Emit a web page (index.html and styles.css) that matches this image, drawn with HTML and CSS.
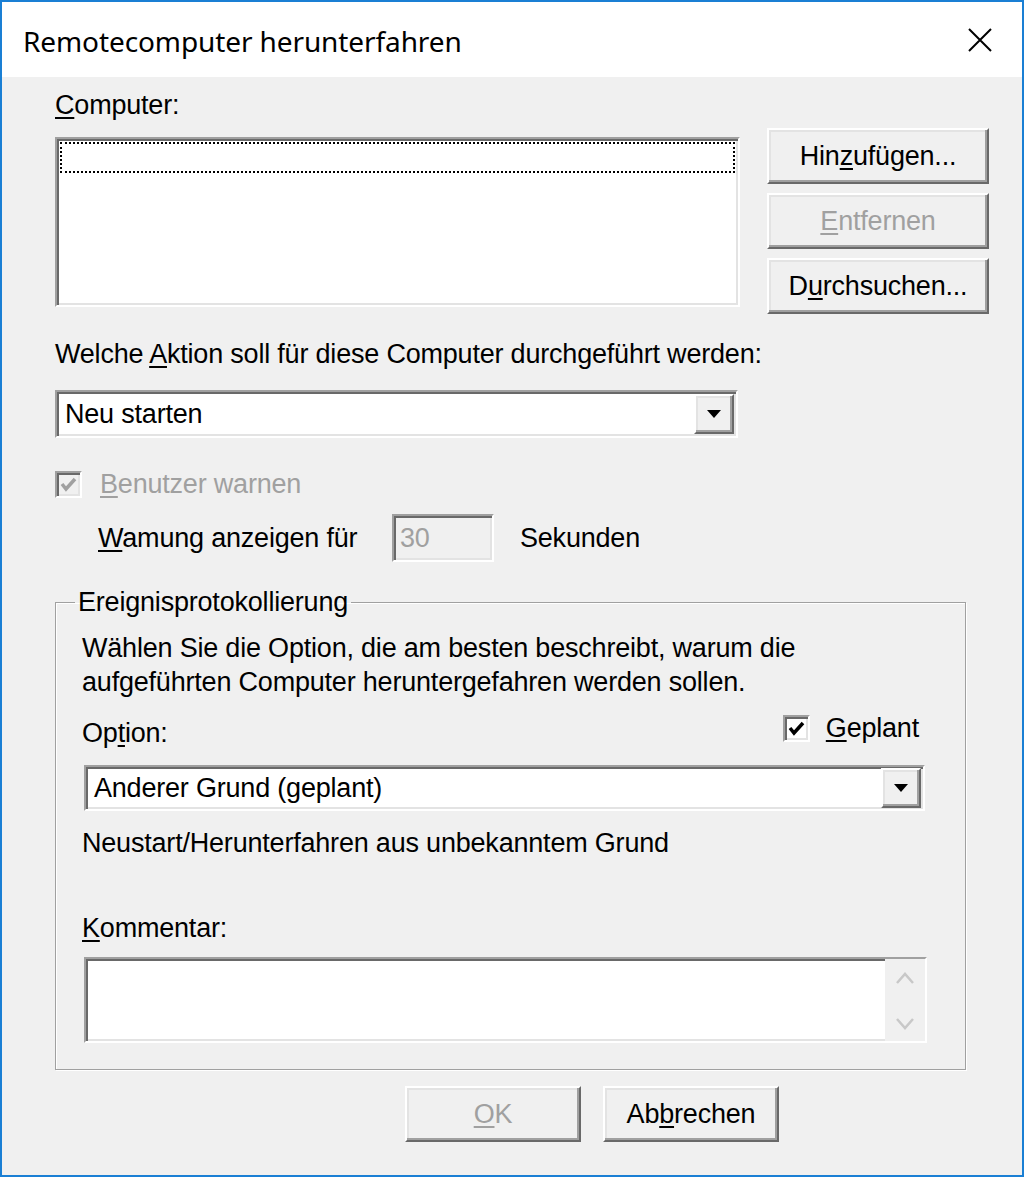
FILE: index.html
```html
<!DOCTYPE html>
<html>
<head lang="de">
    <meta charset="UTF-8">
    <title>Remotecomputer herunterfahren</title>
    <link rel="stylesheet" href="styles.css">
</head>
<body>
<div class="window">
    <div class="titlebar">
        <span class="title">Remotecomputer herunterfahren</span>
        <svg class="close" width="24" height="24" viewBox="0 0 24 24">
            <path d="M1 1 L23 23 M23 1 L1 23" stroke="#000" stroke-width="2" fill="none"/>
        </svg>
    </div>

    <div class="content">
        <div class="label"><u>C</u>omputer:</div>
        <div class="list-row">
            <div class="listbox sunken">
                <div class="focus-item"></div>
            </div>
            <div class="btn-col">
                <div class="btn raised">Hin<u>z</u>ufügen...</div>
                <div class="btn raised disabled"><u>E</u>ntfernen</div>
                <div class="btn raised">D<u>u</u>rchsuchen...</div>
            </div>
        </div>

        <div class="label action-label">Welche <u>A</u>ktion soll für diese Computer durchgeführt werden:</div>
        <div class="combo sunken combo-action">
            <span class="combo-text">Neu starten</span>
            <span class="drop raised"><span class="arrow"></span></span>
        </div>

        <div class="check-row disabled">
            <span class="checkbox sunken gray">
                <svg width="19" height="19" viewBox="0 0 19 19"><path d="M3 9 L7 14 L16 4" stroke="#a0a0a0" stroke-width="3.5" fill="none"/></svg>
            </span>
            <span><u>B</u>enutzer warnen</span>
        </div>

        <div class="warn-row">
            <span class="warn-label"><u>W</u>amung anzeigen für</span>
            <span class="numbox sunken">30</span>
            <span class="unit">Sekunden</span>
        </div>

        <fieldset class="group">
            <legend>Ereignisprotokollierung</legend>
            <p class="desc">Wählen Sie die Option, die am besten beschreibt, warum die<br>aufgeführten Computer heruntergefahren werden sollen.</p>
            <div class="option-row">
                <span class="option-label">Op<u>t</u>ion:</span>
                <span class="geplant">
                    <span class="checkbox sunken">
                        <svg width="19" height="19" viewBox="0 0 19 19"><path d="M3 9 L7 14 L16 4" stroke="#000" stroke-width="3.5" fill="none"/></svg>
                    </span>
                    <span><u>G</u>eplant</span>
                </span>
            </div>
            <div class="combo sunken combo-reason">
                <span class="combo-text">Anderer Grund (geplant)</span>
                <span class="drop raised"><span class="arrow"></span></span>
            </div>
            <div class="label reason">Neustart/Herunterfahren aus unbekanntem Grund</div>
            <div class="label comment-label"><u>K</u>ommentar:</div>
            <div class="comment sunken">
                <div class="scroll">
                    <svg width="20" height="14" viewBox="0 0 20 14"><path d="M2 12 L10 3 L18 12" stroke="#c8c8c8" stroke-width="2.5" fill="none"/></svg>
                    <svg width="20" height="14" viewBox="0 0 20 14"><path d="M2 2 L10 11 L18 2" stroke="#c8c8c8" stroke-width="2.5" fill="none"/></svg>
                </div>
            </div>
        </fieldset>

        <div class="bottom-row">
            <div class="btn raised disabled small"><u>O</u>K</div>
            <div class="btn raised small">Ab<u>b</u>rechen</div>
        </div>
    </div>
</div>
</body>
</html>
```

FILE: styles.css
```css
*{
    margin: 0;
    padding: 0;
    box-sizing: border-box;
}
body{
    font-family: "Liberation Sans", Arial, sans-serif;
    font-size: 27px;
    letter-spacing: -0.2px;
    line-height: 30px;
    color: #000;
    background: #f0f0f0;
}
u{
    text-decoration-thickness: 2px;
    text-underline-offset: 3px;
}
.window{
    width: 1024px;
    height: 1177px;
    border: 2px solid #1a7fd4;
    background: #f0f0f0;
    display: flex;
    flex-direction: column;
}
.titlebar{
    height: 75px;
    background: #fff;
    display: flex;
    align-items: center;
    justify-content: space-between;
    padding: 0 30px 0 21px;
    flex: none;
}
.title{
    font-family: "Noto Sans", "Open Sans", sans-serif;
    font-size: 28px;
    letter-spacing: -0.1px;
    margin-top: 2px;
}
.close{
    margin-top: 1px;
}
.content{
    padding: 13px 0 0 53px;
    flex: 1;
}

/* 3D borders */
.sunken{
    border: 2px solid;
    border-color: #a0a0a0 #fff #fff #a0a0a0;
    box-shadow: inset 2px 2px 0 #696969, inset -2px -2px 0 #e3e3e3;
    background: #fff;
}
.raised{
    border: 2px solid;
    border-color: #fff #696969 #696969 #fff;
    box-shadow: inset -2px -2px 0 #a0a0a0, inset 2px 2px 0 #e3e3e3;
    background: #f0f0f0;
}
.disabled{
    color: #a0a0a0;
}

.list-row{
    display: flex;
    gap: 27px;
    margin-top: 8px;
}
.listbox{
    width: 685px;
    height: 170px;
    margin-top: 9px;
    padding: 3px 3px 0 3px;
}
.focus-item{
    height: 31px;
    border: 2px dotted #000;
}
.btn-col{
    display: flex;
    flex-direction: column;
    gap: 9px;
}
.btn{
    width: 222px;
    height: 56px;
    display: flex;
    align-items: center;
    justify-content: center;
}

.action-label{
    margin-top: 25px;
}
.combo{
    display: flex;
    align-items: center;
    justify-content: space-between;
}
.combo-action{
    width: 683px;
    height: 48px;
    margin-top: 21px;
    padding: 0 2px 0 8px;
}
.drop{
    width: 40px;
    height: 40px;
    display: flex;
    align-items: center;
    justify-content: center;
    border-width: 2px;
}
.arrow{
    width: 0;
    height: 0;
    border-left: 7px solid transparent;
    border-right: 7px solid transparent;
    border-top: 8px solid #000;
}

.check-row{
    display: flex;
    align-items: center;
    gap: 18px;
    height: 30px;
    margin-top: 31px;
}
.checkbox{
    width: 27px;
    height: 27px;
    display: flex;
    align-items: center;
    justify-content: center;
    flex: none;
}
.checkbox.gray{
    background: #f0f0f0;
}

.warn-row{
    display: flex;
    align-items: center;
    margin: 15px 0 0 43px;
    height: 48px;
}
.warn-label{
    width: 294px;
}
.numbox{
    width: 102px;
    height: 48px;
    background: #f0f0f0;
    color: #a0a0a0;
    padding: 0 0 0 6px;
    display: flex;
    align-items: center;
}
.unit{
    margin-left: 26px;
}

.group{
    width: 909px;
    margin-top: 25px;
    border: 1px solid #a0a0a0;
    box-shadow: inset 1px 1px 0 #fff, 1px 1px 0 #fff;
    padding: 0 38px 26px 26px;
}
.group legend{
    margin-left: -7px;
    padding: 0 3px;
}
.desc{
    line-height: 34px;
    margin-top: 14px;
}
.option-row{
    display: flex;
    justify-content: space-between;
    align-items: flex-start;
    margin-top: 14px;
}
.option-label{
    margin-top: 5px;
}
.geplant{
    display: flex;
    align-items: center;
    gap: 16px;
    height: 30px;
    margin-right: 8px;
}
.combo-reason{
    width: 841px;
    height: 46px;
    margin: 17px 0 0 2px;
    padding: 0 2px 0 8px;
}
.reason{
    margin-top: 17px;
}
.comment-label{
    margin-top: 55px;
}
.comment{
    width: 843px;
    height: 86px;
    margin: 14px 0 0 2px;
    display: flex;
    justify-content: flex-end;
}
.scroll{
    width: 40px;
    background: #f0f0f0;
    display: flex;
    flex-direction: column;
    align-items: center;
    justify-content: space-between;
    padding: 12px 0 10px;
}

.bottom-row{
    display: flex;
    gap: 22px;
    margin: 16px 0 0 350px;
}
.btn.small{
    width: 176px;
}
```
